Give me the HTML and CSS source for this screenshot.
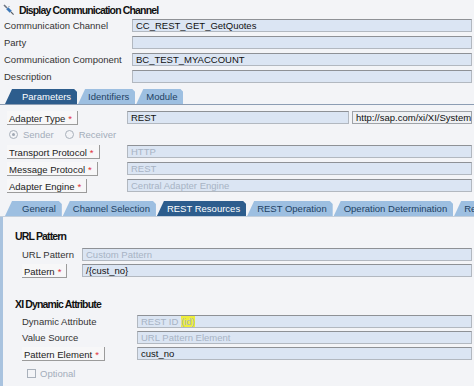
FILE: index.html
```html
<!DOCTYPE html>
<html lang="en">
<head>
    <meta charset="UTF-8">
    <meta name="viewport" content="width=device-width, initial-scale=1.0">
    <title>Display Communication Channel</title>
    <link rel="stylesheet" href="styles.css">
</head>
<body>
    <div class="title">
        <svg class="title-icon" width="12" height="12" viewBox="0 0 12 12">
            <path d="M1 1 L4 4" stroke="#6d7480" stroke-width="1.6"/>
            <path d="M3.2 5.2 L5.2 3.2 L8.8 6.8 L6.8 8.8 Z" fill="#3d78b8"/>
            <path d="M7.6 8.4 L8.4 7.6 L11 10.2 L10.2 11 Z" fill="#5a5f66"/>
            <path d="M5.5 3 L6.5 2" stroke="#8a9099" stroke-width="1"/>
        </svg>
        <span>Display Communication Channel</span>
    </div>

    <div class="head-form">
        <div class="row">
            <span class="lbl">Communication Channel</span>
            <span class="field">CC_REST_GET_GetQuotes</span>
        </div>
        <div class="row">
            <span class="lbl">Party</span>
            <span class="field"></span>
        </div>
        <div class="row">
            <span class="lbl">Communication Component</span>
            <span class="field">BC_TEST_MYACCOUNT</span>
        </div>
        <div class="row">
            <span class="lbl">Description</span>
            <span class="field"></span>
        </div>
    </div>

    <div class="tabs tabs-main">
        <span class="tab active">Parameters</span>
        <span class="tab">Identifiers</span>
        <span class="tab">Module</span>
    </div>

    <div class="params">
        <div class="row">
            <span class="lbl"><span class="req">Adapter Type<b>*</b></span></span>
            <span class="field">REST</span>
            <span class="field ns">http://sap.com/xi/XI/System</span>
        </div>
        <div class="row radios">
            <span class="radio on"></span><span class="radio-text">Sender</span>
            <span class="radio"></span><span class="radio-text">Receiver</span>
        </div>
        <div class="row">
            <span class="lbl"><span class="req">Transport Protocol<b>*</b></span></span>
            <span class="field off">HTTP</span>
        </div>
        <div class="row">
            <span class="lbl"><span class="req">Message Protocol<b>*</b></span></span>
            <span class="field off">REST</span>
        </div>
        <div class="row">
            <span class="lbl"><span class="req">Adapter Engine<b>*</b></span></span>
            <span class="field off">Central Adapter Engine</span>
        </div>
    </div>

    <div class="tabs tabs-sub">
        <span class="tab">General</span>
        <span class="tab">Channel Selection</span>
        <span class="tab active">REST Resources</span>
        <span class="tab">REST Operation</span>
        <span class="tab">Operation Determination</span>
        <span class="tab">Re</span>
    </div>

    <div class="panel">
        <div class="sec-title">URL Pattern</div>
        <div class="sec url">
            <div class="row">
                <span class="lbl">URL Pattern</span>
                <span class="field off">Custom Pattern</span>
            </div>
            <div class="row">
                <span class="lbl"><span class="req">Pattern<b>*</b></span></span>
                <span class="field">/{cust_no}</span>
            </div>
        </div>

        <div class="sec-title second">XI Dynamic Attribute</div>
        <div class="sec dyn">
            <div class="row">
                <span class="lbl">Dynamic Attribute</span>
                <span class="field off">REST ID <span class="hl">(id)</span></span>
            </div>
            <div class="row">
                <span class="lbl">Value Source</span>
                <span class="field off">URL Pattern Element</span>
            </div>
            <div class="row">
                <span class="lbl"><span class="req">Pattern Element<b>*</b></span></span>
                <span class="field">cust_no</span>
            </div>
            <div class="row check-row">
                <span class="check"></span><span class="check-text">Optional</span>
            </div>
        </div>
    </div>
</body>
</html>
```

FILE: styles.css
```css
* {
    margin: 0;
    padding: 0;
    box-sizing: border-box;
    font-family: "Liberation Sans", Arial, sans-serif;
}

body {
    background-color: #f3f4f7;
    color: #333;
    font-size: 9.5px;
    width: 474px;
    height: 386px;
    overflow: hidden;
}

/* title */
.title {
    display: flex;
    align-items: center;
    height: 14px;
    margin-top: 3px;
    padding-left: 3px;
    font-size: 10.5px;
    font-weight: bold;
    letter-spacing: -0.85px;
    color: #111;
}

.title-icon {
    margin-right: 4px;
}

/* rows */
.row {
    display: flex;
    align-items: center;
    height: 13px;
}

.lbl {
    flex: none;
    white-space: nowrap;
}

.field {
    flex: 1;
    height: 13px;
    line-height: 11px;
    padding-left: 3px;
    background-color: #dbe5f3;
    border: 1px solid #b2b8c0;
    border-top-color: #8e9196;
    color: #111;
    white-space: nowrap;
    overflow: hidden;
}

.field.off {
    color: #a7b3c4;
}

.field.ns {
    flex: none;
    width: 120px;
    margin-left: 3px;
    background-color: #eef0f3;
    border-color: #9fa3a8;
}

.head-form {
    display: flex;
    flex-direction: column;
    gap: 4px;
    margin-top: 2px;
    padding: 0 2px 0 4px;
}

.head-form .lbl {
    width: 128px;
}

/* tabs */
.tabs {
    display: flex;
    align-items: flex-end;
    height: 16px;
    padding-left: 5px;
    border-bottom: 1px solid #8c9db3;
}

.tab {
    height: 15px;
    line-height: 15px;
    padding: 0 6px 0 10px;
    background-color: #9dbfe1;
    color: #1e3f63;
    white-space: nowrap;
    clip-path: polygon(0 100%, 7px 0, calc(100% - 3px) 0, 100% 3px, 100% 100%);
}

.tab + .tab {
    margin-left: 1px;
}

.tab.active {
    background-color: #2d5d8d;
    color: #fff;
}

.tabs .tab:first-child {
    padding-left: 17px;
}

.tabs-main {
    margin-top: 6px;
}

.tabs-sub {
    margin-top: 9px;
    border-bottom-color: #c3cfdc;
}

/* parameters */
.params {
    display: flex;
    flex-direction: column;
    gap: 4px;
    padding: 6px 2px 0 7px;
}

.params .lbl {
    width: 120px;
}

.req {
    display: inline-block;
    height: 14px;
    line-height: 13px;
    padding: 1px 5px 0 2px;
    background-color: #f7f7f8;
    border-right: 1px solid #9b9b9b;
    border-bottom: 1px solid #9b9b9b;
    color: #222;
}

.req b {
    margin-left: 3px;
    color: #e0333a;
    font-weight: normal;
}

.radios {
    color: #a3adba;
    padding-left: 2px;
}

.radio {
    width: 9px;
    height: 9px;
    border: 1px solid #a9b1bb;
    border-radius: 50%;
    background-color: #f3f4f7;
    display: flex;
    align-items: center;
    justify-content: center;
}

.radio.on::after {
    content: "";
    width: 3px;
    height: 3px;
    border-radius: 50%;
    background-color: #a0a8b3;
}

.radio-text {
    margin: 0 11px 0 5px;
}

/* lower panel */
.panel {
    border-left: 3px solid #a9c3df;
    height: 180px;
    padding: 13px 2px 0 12px;
}

.sec-title {
    height: 13px;
    line-height: 13px;
    font-size: 10.5px;
    font-weight: bold;
    letter-spacing: -0.85px;
    color: #111;
}

.sec-title.second {
    margin-top: 21px;
}

.sec {
    display: flex;
    flex-direction: column;
    gap: 3px;
    padding-left: 7px;
}

.sec.url {
    margin-top: 5px;
}

.sec.url .lbl {
    width: 60px;
}

.sec.dyn {
    margin-top: 4px;
}

.sec.dyn .lbl {
    width: 115px;
}

.hl {
    background-color: #eeee3a;
    color: #a7b3c4;
}

.check-row {
    margin-top: 4px;
    color: #a3adba;
    padding-left: 5px;
}

.check {
    width: 9px;
    height: 9px;
    border: 1px solid #a9b1bb;
    background-color: #f3f4f7;
}

.check-text {
    margin-left: 4px;
}
```
